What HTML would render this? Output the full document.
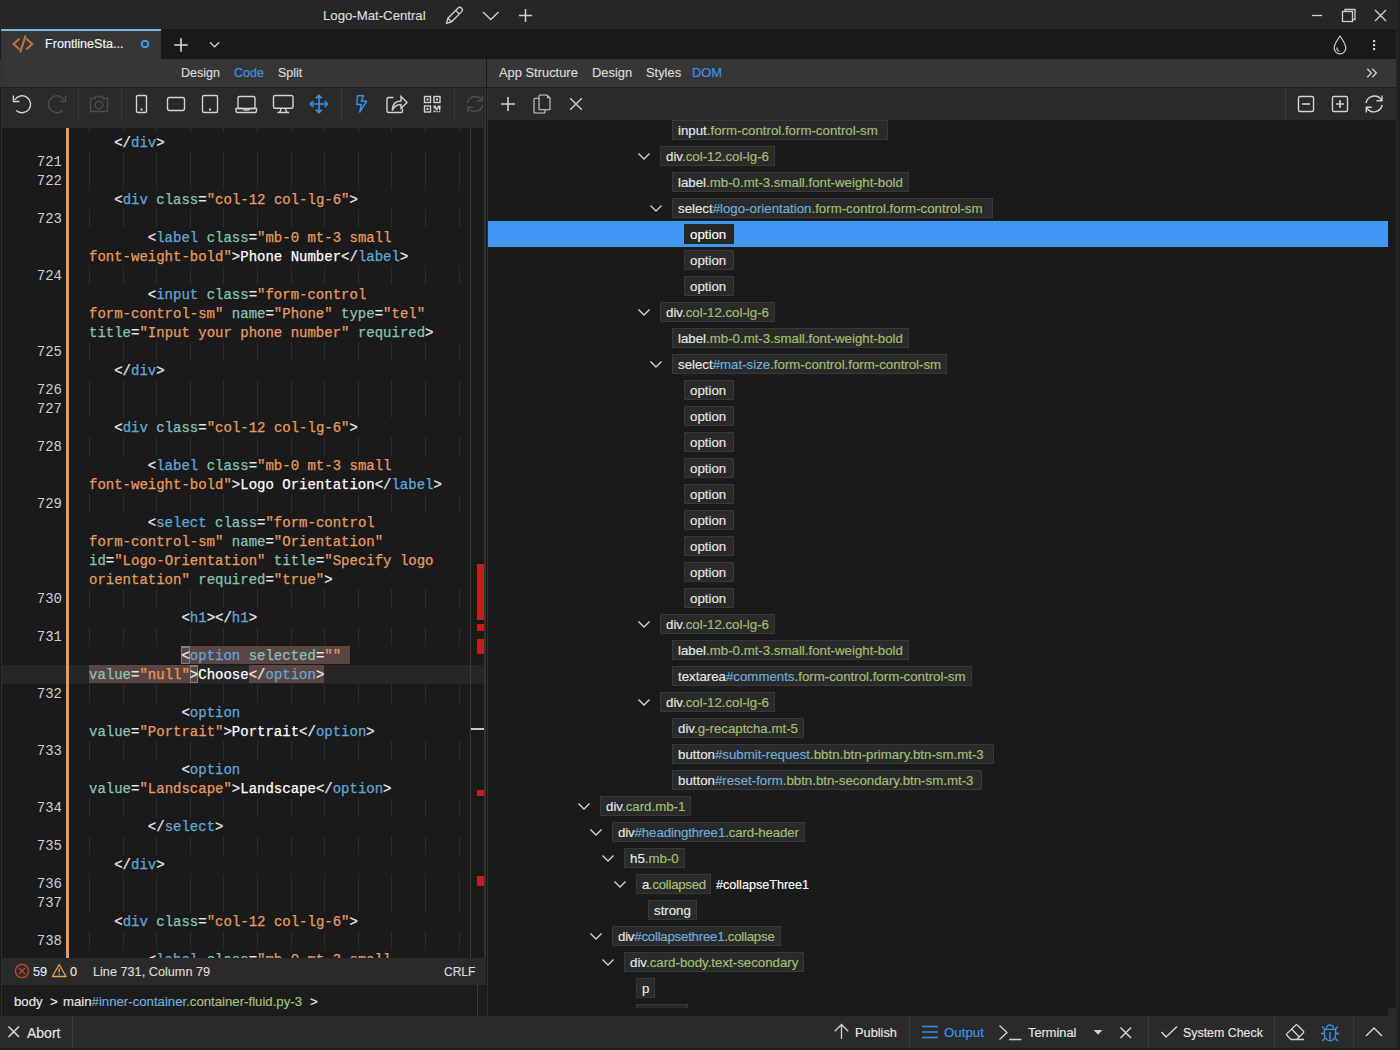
<!DOCTYPE html>
<html><head><meta charset="utf-8">
<style>
*{box-sizing:border-box}
html,body{margin:0;padding:0}
body{width:1400px;height:1050px;overflow:hidden;position:relative;background:#1a1a1a;font-family:"Liberation Sans",sans-serif;color:#d9d9d9;font-size:13px}
.a{position:absolute}
svg{position:absolute;overflow:visible}
.t{position:absolute;white-space:nowrap;line-height:16px;-webkit-text-stroke:0.15px currentColor}
/* code */
.code{font-family:"Liberation Mono",monospace;font-size:14px;-webkit-text-stroke:0.25px currentColor}
.row{position:absolute;left:0;height:19px;line-height:19px;white-space:pre;padding-top:1px}
.ln{position:absolute;left:0;width:61px;text-align:right;height:19px;line-height:19px;padding-top:1px;color:#cfcfcf;font-family:"Liberation Mono",monospace;font-size:14px}
.b{color:#e6e6e6}.tg{color:#5ea9da}.at{color:#82c6b6}.s{color:#e89c5a}.x{color:#ffffff}
.guides{position:absolute;left:88px;width:381px;height:19px;background-image:repeating-linear-gradient(90deg,#2c2c2c 0 1px,transparent 1px 33.6px)}
.mk{background:#5a4543;display:inline-block;height:17px;vertical-align:top;box-shadow:0 -1px 0 #5a4543}.bx{display:inline-block;height:17px;vertical-align:top;box-shadow:inset 0 0 0 1px #8c7b78,0 -1px 0 #8c7b78}
/* dom */
.n{position:absolute;height:20px;line-height:18px;padding:1px 5px 0 5px;background:#2a2a2a;border:1px solid #383838;color:#e8e8e8;font-size:13.27px;white-space:nowrap;-webkit-text-stroke:0.15px currentColor}
.n i{font-style:normal;color:#a3c071}
.n u{text-decoration:none;color:#6cb0de}
.chev{position:absolute;width:12px;height:7px}
</style></head><body>

<!-- title bar -->
<div class="a" style="left:0;top:0;width:1400px;height:29px;background:#262626"></div>
<div class="t" style="left:323px;top:8px;font-size:13.2px;color:#dcdcdc">Logo-Mat-Central</div>

<!-- tab bar -->
<div class="a" style="left:0;top:29px;width:1400px;height:30px;background:#191919"></div>
<div class="a" style="left:1px;top:29px;width:160px;height:30px;background:#363636;border-top:2px solid #7fb6d6"></div>
<div class="t" style="left:45px;top:36px;font-size:12.6px;color:#f2f2f2">FrontlineSta...</div>

<!-- view bar -->
<div class="a" style="left:0;top:59px;width:486px;height:28px;background:#363636"></div>
<div class="a" style="left:487px;top:59px;width:913px;height:28px;background:#363636"></div>
<div class="a" style="left:0;top:87px;width:1400px;height:1px;background:#202020"></div>
<div class="t" style="left:181px;top:65px;color:#dcdcdc;font-size:12.5px">Design</div>
<div class="t" style="left:234px;top:65px;color:#3d94f0;font-size:12.5px">Code</div>
<div class="t" style="left:278px;top:65px;color:#dcdcdc;font-size:12.5px">Split</div>
<div class="t" style="left:499px;top:65px;color:#dcdcdc;font-size:12.9px">App Structure</div>
<div class="t" style="left:592px;top:65px;color:#dcdcdc;font-size:12.9px">Design</div>
<div class="t" style="left:646px;top:65px;color:#dcdcdc;font-size:12.9px">Styles</div>
<div class="t" style="left:692px;top:65px;color:#3d94f0;font-size:12.9px">DOM</div>

<!-- toolbars -->
<div class="a" style="left:1px;top:88px;width:485px;height:40px;background:#2a2a2a"></div>
<div class="a" style="left:487px;top:88px;width:910px;height:32px;background:#2a2a2a"></div>
<div class="a" style="left:486px;top:59px;width:1px;height:957px;background:#191919"></div>

<!-- editor -->
<div class="a" style="left:1px;top:128px;width:484px;height:830px;background:#1a1a1a;overflow:hidden" id="ed">
<div class="guides" style="top:-14px"></div>
<div class="row code" style="left:88px;top:5px">   <span class="b">&lt;/</span><span class="tg">div</span><span class="b">&gt;</span></div>
<div class="guides" style="top:24px"></div>
<div class="ln" style="top:24px">721</div>
<div class="guides" style="top:43px"></div>
<div class="ln" style="top:43px">722</div>
<div class="row code" style="left:88px;top:62px">   <span class="b">&lt;</span><span class="tg">div</span><span class="b"> </span><span class="at">class</span><span class="b">=</span><span class="s">&quot;col-12 col-lg-6&quot;</span><span class="b">&gt;</span></div>
<div class="guides" style="top:81px"></div>
<div class="ln" style="top:81px">723</div>
<div class="row code" style="left:88px;top:100px">       <span class="b">&lt;</span><span class="tg">label</span><span class="b"> </span><span class="at">class</span><span class="b">=</span><span class="s">&quot;mb-0 mt-3 small</span></div>
<div class="row code" style="left:88px;top:119px"><span class="s">font-weight-bold&quot;</span><span class="b">&gt;</span><span class="x">Phone Number</span><span class="b">&lt;/</span><span class="tg">label</span><span class="b">&gt;</span></div>
<div class="guides" style="top:138px"></div>
<div class="ln" style="top:138px">724</div>
<div class="row code" style="left:88px;top:157px">       <span class="b">&lt;</span><span class="tg">input</span><span class="b"> </span><span class="at">class</span><span class="b">=</span><span class="s">&quot;form-control</span></div>
<div class="row code" style="left:88px;top:176px"><span class="s">form-control-sm&quot;</span><span class="b"> </span><span class="at">name</span><span class="b">=</span><span class="s">&quot;Phone&quot;</span><span class="b"> </span><span class="at">type</span><span class="b">=</span><span class="s">&quot;tel&quot;</span></div>
<div class="row code" style="left:88px;top:195px"><span class="at">title</span><span class="b">=</span><span class="s">&quot;Input your phone number&quot;</span><span class="b"> </span><span class="at">required</span><span class="b">&gt;</span></div>
<div class="guides" style="top:214px"></div>
<div class="ln" style="top:214px">725</div>
<div class="row code" style="left:88px;top:233px">   <span class="b">&lt;/</span><span class="tg">div</span><span class="b">&gt;</span></div>
<div class="guides" style="top:252px"></div>
<div class="ln" style="top:252px">726</div>
<div class="guides" style="top:271px"></div>
<div class="ln" style="top:271px">727</div>
<div class="row code" style="left:88px;top:290px">   <span class="b">&lt;</span><span class="tg">div</span><span class="b"> </span><span class="at">class</span><span class="b">=</span><span class="s">&quot;col-12 col-lg-6&quot;</span><span class="b">&gt;</span></div>
<div class="guides" style="top:309px"></div>
<div class="ln" style="top:309px">728</div>
<div class="row code" style="left:88px;top:328px">       <span class="b">&lt;</span><span class="tg">label</span><span class="b"> </span><span class="at">class</span><span class="b">=</span><span class="s">&quot;mb-0 mt-3 small</span></div>
<div class="row code" style="left:88px;top:347px"><span class="s">font-weight-bold&quot;</span><span class="b">&gt;</span><span class="x">Logo Orientation</span><span class="b">&lt;/</span><span class="tg">label</span><span class="b">&gt;</span></div>
<div class="guides" style="top:366px"></div>
<div class="ln" style="top:366px">729</div>
<div class="row code" style="left:88px;top:385px">       <span class="b">&lt;</span><span class="tg">select</span><span class="b"> </span><span class="at">class</span><span class="b">=</span><span class="s">&quot;form-control</span></div>
<div class="row code" style="left:88px;top:404px"><span class="s">form-control-sm&quot;</span><span class="b"> </span><span class="at">name</span><span class="b">=</span><span class="s">&quot;Orientation&quot;</span></div>
<div class="row code" style="left:88px;top:423px"><span class="at">id</span><span class="b">=</span><span class="s">&quot;Logo-Orientation&quot;</span><span class="b"> </span><span class="at">title</span><span class="b">=</span><span class="s">&quot;Specify logo</span></div>
<div class="row code" style="left:88px;top:442px"><span class="s">orientation&quot;</span><span class="b"> </span><span class="at">required</span><span class="b">=</span><span class="s">&quot;true&quot;</span><span class="b">&gt;</span></div>
<div class="guides" style="top:461px"></div>
<div class="ln" style="top:461px">730</div>
<div class="row code" style="left:88px;top:480px">           <span class="b">&lt;</span><span class="tg">h1</span><span class="b">&gt;&lt;/</span><span class="tg">h1</span><span class="b">&gt;</span></div>
<div class="guides" style="top:499px"></div>
<div class="ln" style="top:499px">731</div>
<div class="row code" style="left:88px;top:518px">           <span class="mk"><span class="bx b">&lt;</span><span class="tg">option</span><span class="b"> </span><span class="at">selected</span><span class="b">=</span><span class="s">""</span><span class="b"> </span></span></div>
<div class="a" style="left:1px;top:537px;width:483px;height:19px;background:#262626"></div>
<div class="row code" style="left:88px;top:537px"><span class="mk"><span class="at">value</span><span class="b">=</span><span class="s">"null"</span><span class="bx b">&gt;</span></span><span class="x">Choose</span><span class="mk"><span class="b">&lt;/</span><span class="tg">option</span><span class="b">&gt;</span></span></div>
<div class="guides" style="top:556px"></div>
<div class="ln" style="top:556px">732</div>
<div class="row code" style="left:88px;top:575px">           <span class="b">&lt;</span><span class="tg">option</span></div>
<div class="row code" style="left:88px;top:594px"><span class="at">value</span><span class="b">=</span><span class="s">&quot;Portrait&quot;</span><span class="b">&gt;</span><span class="x">Portrait</span><span class="b">&lt;/</span><span class="tg">option</span><span class="b">&gt;</span></div>
<div class="guides" style="top:613px"></div>
<div class="ln" style="top:613px">733</div>
<div class="row code" style="left:88px;top:632px">           <span class="b">&lt;</span><span class="tg">option</span></div>
<div class="row code" style="left:88px;top:651px"><span class="at">value</span><span class="b">=</span><span class="s">&quot;Landscape&quot;</span><span class="b">&gt;</span><span class="x">Landscape</span><span class="b">&lt;/</span><span class="tg">option</span><span class="b">&gt;</span></div>
<div class="guides" style="top:670px"></div>
<div class="ln" style="top:670px">734</div>
<div class="row code" style="left:88px;top:689px">       <span class="b">&lt;/</span><span class="tg">select</span><span class="b">&gt;</span></div>
<div class="guides" style="top:708px"></div>
<div class="ln" style="top:708px">735</div>
<div class="row code" style="left:88px;top:727px">   <span class="b">&lt;/</span><span class="tg">div</span><span class="b">&gt;</span></div>
<div class="guides" style="top:746px"></div>
<div class="ln" style="top:746px">736</div>
<div class="guides" style="top:765px"></div>
<div class="ln" style="top:765px">737</div>
<div class="row code" style="left:88px;top:784px">   <span class="b">&lt;</span><span class="tg">div</span><span class="b"> </span><span class="at">class</span><span class="b">=</span><span class="s">&quot;col-12 col-lg-6&quot;</span><span class="b">&gt;</span></div>
<div class="guides" style="top:803px"></div>
<div class="ln" style="top:803px">738</div>
<div class="row code" style="left:88px;top:822px">       <span class="b">&lt;</span><span class="tg">label</span><span class="b"> </span><span class="at">class</span><span class="b">=</span><span class="s">&quot;mb-0 mt-3 small</span></div>
</div>
<div class="a" style="left:488px;top:120px;width:909px;height:888px;overflow:hidden">
<div class="n" style="left:184px;top:0px;width:216px">input<i>.form-control.form-control-sm</i></div>
<svg class="chev" style="left:150px;top:33px" width="12" height="7" viewBox="0 0 12 7"><path d="M0.5 0.5L6 6L11.5 0.5" fill="none" stroke="#d8d8d8" stroke-width="1.3"/></svg>
<div class="n" style="left:172px;top:26px">div<i>.col-12.col-lg-6</i></div>
<div class="n" style="left:184px;top:52px">label<i>.mb-0.mt-3.small.font-weight-bold</i></div>
<svg class="chev" style="left:162px;top:85px" width="12" height="7" viewBox="0 0 12 7"><path d="M0.5 0.5L6 6L11.5 0.5" fill="none" stroke="#d8d8d8" stroke-width="1.3"/></svg>
<div class="n" style="left:184px;top:78px;width:321px">select<u>#logo-orientation</u><i>.form-control.form-control-sm</i></div>
<div class="a" style="left:0;top:101px;width:900px;height:26px;background:#4097f5"></div>
<div class="n" style="left:196px;top:104px;width:50px;background:#262626;border-color:#262626;color:#fff">option</div>
<div class="n" style="left:196px;top:130px;width:50px">option</div>
<div class="n" style="left:196px;top:156px;width:50px">option</div>
<svg class="chev" style="left:150px;top:189px" width="12" height="7" viewBox="0 0 12 7"><path d="M0.5 0.5L6 6L11.5 0.5" fill="none" stroke="#d8d8d8" stroke-width="1.3"/></svg>
<div class="n" style="left:172px;top:182px">div<i>.col-12.col-lg-6</i></div>
<div class="n" style="left:184px;top:208px">label<i>.mb-0.mt-3.small.font-weight-bold</i></div>
<svg class="chev" style="left:162px;top:241px" width="12" height="7" viewBox="0 0 12 7"><path d="M0.5 0.5L6 6L11.5 0.5" fill="none" stroke="#d8d8d8" stroke-width="1.3"/></svg>
<div class="n" style="left:184px;top:234px">select<u>#mat-size</u><i>.form-control.form-control-sm</i></div>
<div class="n" style="left:196px;top:260px;width:50px">option</div>
<div class="n" style="left:196px;top:286px;width:50px">option</div>
<div class="n" style="left:196px;top:312px;width:50px">option</div>
<div class="n" style="left:196px;top:338px;width:50px">option</div>
<div class="n" style="left:196px;top:364px;width:50px">option</div>
<div class="n" style="left:196px;top:390px;width:50px">option</div>
<div class="n" style="left:196px;top:416px;width:50px">option</div>
<div class="n" style="left:196px;top:442px;width:50px">option</div>
<div class="n" style="left:196px;top:468px;width:50px">option</div>
<svg class="chev" style="left:150px;top:501px" width="12" height="7" viewBox="0 0 12 7"><path d="M0.5 0.5L6 6L11.5 0.5" fill="none" stroke="#d8d8d8" stroke-width="1.3"/></svg>
<div class="n" style="left:172px;top:494px">div<i>.col-12.col-lg-6</i></div>
<div class="n" style="left:184px;top:520px">label<i>.mb-0.mt-3.small.font-weight-bold</i></div>
<div class="n" style="left:184px;top:546px">textarea<u>#comments</u><i>.form-control.form-control-sm</i></div>
<svg class="chev" style="left:150px;top:579px" width="12" height="7" viewBox="0 0 12 7"><path d="M0.5 0.5L6 6L11.5 0.5" fill="none" stroke="#d8d8d8" stroke-width="1.3"/></svg>
<div class="n" style="left:172px;top:572px">div<i>.col-12.col-lg-6</i></div>
<div class="n" style="left:184px;top:598px">div<i>.g-recaptcha.mt-5</i></div>
<div class="n" style="left:184px;top:624px;width:322px">button<u>#submit-request</u><i>.bbtn.btn-primary.btn-sm.mt-3</i></div>
<div class="n" style="left:184px;top:650px;width:310px">button<u>#reset-form</u><i>.bbtn.btn-secondary.btn-sm.mt-3</i></div>
<svg class="chev" style="left:90px;top:683px" width="12" height="7" viewBox="0 0 12 7"><path d="M0.5 0.5L6 6L11.5 0.5" fill="none" stroke="#d8d8d8" stroke-width="1.3"/></svg>
<div class="n" style="left:112px;top:676px">div<i>.card.mb-1</i></div>
<svg class="chev" style="left:102px;top:709px" width="12" height="7" viewBox="0 0 12 7"><path d="M0.5 0.5L6 6L11.5 0.5" fill="none" stroke="#d8d8d8" stroke-width="1.3"/></svg>
<div class="n" style="left:124px;top:702px;width:193px;letter-spacing:-0.12px">div<u>#headingthree1</u><i>.card-header</i></div>
<svg class="chev" style="left:114px;top:735px" width="12" height="7" viewBox="0 0 12 7"><path d="M0.5 0.5L6 6L11.5 0.5" fill="none" stroke="#d8d8d8" stroke-width="1.3"/></svg>
<div class="n" style="left:136px;top:728px">h5<i>.mb-0</i></div>
<svg class="chev" style="left:126px;top:761px" width="12" height="7" viewBox="0 0 12 7"><path d="M0.5 0.5L6 6L11.5 0.5" fill="none" stroke="#d8d8d8" stroke-width="1.3"/></svg>
<div class="n" style="left:148px;top:754px;width:75px;letter-spacing:-0.3px">a<i>.collapsed</i></div>
<div class="t" style="left:228px;top:757px;font-size:12.6px;color:#fff">#collapseThree1</div>
<div class="n" style="left:160px;top:780px">strong</div>
<svg class="chev" style="left:102px;top:813px" width="12" height="7" viewBox="0 0 12 7"><path d="M0.5 0.5L6 6L11.5 0.5" fill="none" stroke="#d8d8d8" stroke-width="1.3"/></svg>
<div class="n" style="left:124px;top:806px;width:169px;letter-spacing:-0.24px">div<u>#collapsethree1</u><i>.collapse</i></div>
<svg class="chev" style="left:114px;top:839px" width="12" height="7" viewBox="0 0 12 7"><path d="M0.5 0.5L6 6L11.5 0.5" fill="none" stroke="#d8d8d8" stroke-width="1.3"/></svg>
<div class="n" style="left:136px;top:832px">div<i>.card-body.text-secondary</i></div>
<div class="n" style="left:148px;top:858px">p</div>
<div class="n" style="left:148px;top:884px"><span style="display:inline-block;width:40px"></span></div>
</div>

<!-- editor status -->
<div class="a" style="left:1px;top:958px;width:485px;height:27px;background:#2a2a2a"></div>
<div class="t" style="left:93px;top:964px;font-size:12.7px;color:#dcdcdc">Line 731, Column 79</div>
<div class="t" style="left:444px;top:964px;font-size:12px;color:#dcdcdc">CRLF</div>
<div class="t" style="left:33px;top:964px;font-size:12.7px;color:#e6e6e6">59</div>
<div class="t" style="left:70px;top:964px;font-size:12.7px;color:#e6e6e6">0</div>
<div class="a" style="left:1px;top:985px;width:484px;height:31px;background:#1c1c1c"></div>
<div class="t" style="left:14px;top:994px;font-size:13.2px;color:#e6e6e6">body</div>
<div class="t" style="left:50px;top:994px;font-size:13.2px;color:#e6e6e6">&gt;</div>
<div class="t" style="left:63px;top:994px;font-size:13.2px;color:#e6e6e6">main<span style="color:#6cb0de">#inner-container</span><span style="color:#a9c27a">.container-fluid.py-3</span></div>
<div class="t" style="left:310px;top:994px;font-size:13.2px;color:#e6e6e6">&gt;</div>

<!-- bottom bar -->
<div class="a" style="left:0;top:1016px;width:1400px;height:32px;background:#2a2a2a"></div>
<div class="a" style="left:0;top:1048px;width:1400px;height:2px;background:#1c1c1c"></div>
<div class="t" style="left:27px;top:1025px;font-size:14px;color:#e6e6e6">Abort</div>
<div class="t" style="left:855px;top:1025px;font-size:12.8px;color:#e6e6e6">Publish</div>
<div class="t" style="left:944px;top:1025px;font-size:13.3px;color:#3d94f0">Output</div>
<div class="t" style="left:1028px;top:1025px;font-size:12.8px;color:#e6e6e6">Terminal</div>
<div class="t" style="left:1183px;top:1025px;font-size:12.4px;color:#e6e6e6">System Check</div>
<svg style="left:0;top:0" width="1400" height="1050" viewBox="0 0 1400 1050" fill="none" stroke-linecap="butt" stroke-linejoin="miter">
<!-- title bar -->
<g stroke="#cfcfcf" stroke-width="1.3">
<path d="M446.5 23.2 L447.9 18.2 L458.1 8.0 A2.55 2.55 0 0 1 461.7 11.6 L451.5 21.8 Z M455.7 10.4 L459.3 14.0 M447.9 18.2 L451.5 21.8"/>
<path d="M483 12 L490.8 19.5 L498.5 12"/>
<path d="M525.5 9 V22 M519 15.5 H532" stroke-width="1.5"/>
<path d="M1312 15.5 H1322"/>
<rect x="1342.5" y="11.5" width="10" height="10"/>
<path d="M1345 11.5 V9.5 H1355 V19.5 H1352.5"/>
<path d="M1375 10 L1386 21 M1386 10 L1375 21" stroke-width="1.4"/>
</g>
<!-- tab bar -->
<g stroke="#c2713b" stroke-width="2.2" stroke-linecap="round" stroke-linejoin="round">
<path d="M18.8 39.3 L13.5 44 L18.8 48.7 M27 39.3 L32.3 44 L27 48.7"/>
<path d="M25.3 36.5 L20.5 51.5"/>
</g>
<circle cx="145" cy="44" r="3.3" stroke="#3d9cf5" stroke-width="1.9"/>
<path d="M181 38.3 V51.7 M174.3 45 H187.7" stroke="#d8d8d8" stroke-width="1.6"/>
<path d="M210 42.2 L214.6 46.8 L219.2 42.2" stroke="#cfcfcf" stroke-width="1.3"/>
<path d="M1340 36 C1337 40.5 1334.2 44 1334.2 48 A5.8 5.8 0 0 0 1345.8 48 C1345.8 44 1343 40.5 1340 36 Z" stroke="#d0d0d0" stroke-width="1.2"/>
<path d="M1336.8 47.5 A3.6 3.6 0 0 0 1339.5 51.2" stroke="#d0d0d0" stroke-width="1.1"/>
<g fill="#d0d0d0"><rect x="1373" y="40" width="2.2" height="2.2"/><rect x="1373" y="44" width="2.2" height="2.2"/><rect x="1373" y="48" width="2.2" height="2.2"/></g>
<!-- view bar >> -->
<path d="M1367.3 68.8 L1371.3 73 L1367.3 77.2 M1372.3 68.8 L1376.3 73 L1372.3 77.2" stroke="#d0d0d0" stroke-width="1.3"/>
<!-- toolbar separators -->
<g stroke="#3a3a3a" stroke-width="1">
<path d="M78.5 88 V120 M121.5 88 V120 M341.5 88 V120 M454.5 88 V120 M1285.5 88 V120"/>
</g>
<path d="M485.5 88 V128" stroke="#383838"/>
<path d="M487.5 88 V120" stroke="#333"/>
<!-- toolbar left -->
<g stroke="#d2d2d2" stroke-width="1.4">
<path d="M14.8 100 A8.5 8.5 0 1 1 16.3 110.5"/>
<path d="M13.4 95.5 V101.5 H19.5"/>
<rect x="136.5" y="95.5" width="10" height="17" rx="1.5"/>
<rect x="167.5" y="97.5" width="17" height="13" rx="2"/>
<rect x="202.5" y="95.5" width="15" height="17" rx="1.5"/>
<rect x="238" y="96.5" width="17" height="12" rx="1.5"/>
<path d="M236 108.5 H243 L244.5 110 H248.5 L250 108.5 H256.5 V111 A1.5 1.5 0 0 1 255 112.5 H237.5 A1.5 1.5 0 0 1 236 111 Z"/>
<rect x="273.5" y="95.5" width="19.5" height="12.8" rx="1.5"/>
<path d="M281.3 108.3 L279.8 112.3 M285.2 108.3 L286.7 112.3 M277.5 112.5 H289"/>
<path d="M393.5 97.5 H388.5 A1.5 1.5 0 0 0 387 99 V111 A1.5 1.5 0 0 0 388.5 112.5 H401 A1.5 1.5 0 0 0 402.5 111 V108.5"/>
<path d="M392.3 110.5 C392.3 104.5 395.5 101 401 101 V96.5 L407 102.5 L401 108.3 V104.5 C397 104.5 394 106.5 392.3 110.5 Z"/>
<rect x="424.5" y="96.5" width="6" height="6"/><rect x="434" y="96.5" width="6" height="6"/><rect x="424.5" y="106" width="6" height="6"/>
</g>
<g fill="#d2d2d2"><rect x="140.5" y="108.5" width="2" height="2"/><rect x="209" y="108.5" width="2" height="2"/>
<rect x="426.5" y="98.5" width="2" height="2"/><rect x="436" y="98.5" width="2" height="2"/><rect x="426.5" y="108" width="2" height="2"/>
<path d="M433.5 105.5 H436 V107.5 H437.5 V105.5 H440.5 V110 H439 V108.5 H437.5 V110 H435.5 V108.5 H433.5 Z M433.5 110.5 h2 v1.8 h-2z M436.5 110.8 h1.5 v1.5 h-1.5z M438.8 110.8 h1.5 v1.5 h-1.5z"/></g>
<g stroke="#4d4d4d" stroke-width="1.4">
<path d="M64.2 100 A8.5 8.5 0 1 0 62.7 110.5"/>
<path d="M65.6 95.5 V101.5 H59.5"/>
<path d="M90.5 98.5 H95.3 V96.5 H102.7 V98.5 H107.5 V111.5 H90.5 Z"/>
<circle cx="99" cy="105" r="3.8"/>
<path d="M467.3 103 A8 8 0 0 1 482 100.5 M482.7 105 A8 8 0 0 1 468 107.5"/>
<path d="M482.3 95.5 V100.8 H477 M467.7 112.5 V107.2 H473"/>
</g>
<g stroke="#3a8fe6" stroke-width="1.7" stroke-linejoin="round">
<path d="M310.5 104 H327.5 M319 95.5 V112.5"/>
<path d="M313.3 101 L310.3 104 L313.3 107 M324.7 101 L327.7 104 L324.7 107 M316 98.3 L319 95.3 L322 98.3 M316 109.7 L319 112.7 L322 109.7"/>
<path d="M357.5 95.7 H363.5 L361.3 101.3 H366.5 L359.8 112 L361.4 104.5 H356.9 Z" stroke-width="1.5"/>
</g>
<!-- toolbar right -->
<g stroke="#d2d2d2" stroke-width="1.4">
<path d="M508 97 V111 M501 104 H515" stroke-width="1.6"/>
<path d="M539 98.3 H535 A1 1 0 0 0 534 99.3 V112 A1 1 0 0 0 535 113 H544 A1 1 0 0 0 545 112 V109.7" stroke-width="1.1"/>
<path d="M540 95 H547 L550 98 V108.7 A1 1 0 0 1 549 109.7 H540 A1 1 0 0 1 539 108.7 V96 A1 1 0 0 1 540 95 Z" stroke-width="1.1"/>
<path d="M570.2 98.2 L581.8 109.8 M581.8 98.2 L570.2 109.8" stroke-width="1.4"/>
<rect x="1298.5" y="96.5" width="15" height="15" rx="1.5"/>
<path d="M1302 104 H1310" stroke-width="1.6"/>
<rect x="1332.5" y="96.5" width="15" height="15" rx="1.5"/>
<path d="M1336 104 H1344 M1340 100 V108" stroke-width="1.6"/>
<path d="M1366 103 A8.5 8.5 0 0 1 1381.5 100 M1382.2 105 A8.5 8.5 0 0 1 1366.8 108"/>
<path d="M1382 95.5 V100.8 H1376.5 M1366.3 112.5 V107.2 H1371.8"/>
</g>
<path d="M547 95.8 L549.4 98.2 H547 Z" fill="#d2d2d2"/>
<!-- editor decorations -->
<rect x="66" y="128" width="3" height="830" fill="#e59c56"/>
<path d="M1.5 58 V1016" stroke="#2e2e2e"/>
<path d="M470.5 128 V958" stroke="#3a3a3a"/>
<rect x="484" y="128" width="2" height="830" fill="#333"/>
<path d="M477.5 985 V1016" stroke="#3a3a3a"/>
<path d="M487.5 120 V1016" stroke="#303030"/>
<rect x="1396" y="0" width="4" height="1050" fill="#202020"/><path d="M1396.5 0 V1050" stroke="#2a2a2a"/>
<rect x="1388" y="1008" width="8" height="8" fill="#2a2a2a"/>
<g fill="#c41d1d"><rect x="477" y="564" width="7" height="56"/><rect x="477" y="624" width="7" height="7"/><rect x="477" y="639" width="7" height="15"/><rect x="477" y="790" width="7" height="6"/><rect x="477" y="876" width="7" height="10"/></g>
<rect x="471" y="728" width="13" height="2" fill="#c8c8c8"/>
<!-- status -->
<circle cx="22" cy="971" r="6.6" stroke="#c4473a" stroke-width="1.3"/>
<path d="M19 968 L25 974 M25 968 L19 974" stroke="#c4473a" stroke-width="1.2"/>
<path d="M59.2 964.5 L66 976.5 H52.4 Z" stroke="#e5a24e" stroke-width="1.3" stroke-linejoin="round"/>
<path d="M59.2 968.5 V972.5" stroke="#e5a24e" stroke-width="1.4"/><rect x="58.5" y="973.7" width="1.4" height="1.4" fill="#e5a24e"/>
<!-- bottom bar -->
<path d="M8.5 1026.5 L19 1037 M19 1026.5 L8.5 1037" stroke="#dedede" stroke-width="1.5"/>
<g stroke="#3a3a3a"><path d="M72.5 1016 V1048 M909.5 1016 V1048 M1148.5 1016 V1048 M1274.5 1016 V1048 M1353.5 1016 V1048"/></g>
<g stroke="#d2d2d2" stroke-width="1.3">
<path d="M841.5 1024.5 V1039 M834.8 1031.2 L841.5 1024.5 L848.2 1031.2"/>
<path d="M999.5 1025.5 L1007 1032.5 L999.5 1039.5 M1009 1039.5 H1021.5"/>
<path d="M1120.5 1027.5 L1131 1038 M1131 1027.5 L1120.5 1038" stroke-width="1.5"/>
<path d="M1161.5 1032 L1166 1037 L1177 1026.5" stroke-width="1.5"/>
<path d="M1295.8 1025 A1 1 0 0 1 1297.2 1025 L1303.5 1031.3 A1 1 0 0 1 1303.5 1032.7 L1296.7 1039.5 H1291 L1286.8 1035.3 A1 1 0 0 1 1286.8 1033.9 Z M1291.8 1029.3 L1298.8 1036.5 M1296.7 1039.5 H1304"/>
<path d="M1366 1036 L1374 1028 L1382 1036" stroke-width="1.5"/>
</g>
<path d="M1093.7 1030 H1102.4 L1098 1034.8 Z" fill="#d0d0d0"/>
<g stroke="#3d8fe6" stroke-width="1.5">
<path d="M922 1026.5 H938 M922 1032 H938 M922 1037.5 H938"/>
<path d="M1326.4 1028.6 A3.6 3.6 0 0 1 1333.6 1028.6 M1324.4 1029.4 H1335.6 V1034.5 A5.6 6.2 0 0 1 1324.4 1034.5 Z M1330 1032 V1039.5 M1325 1029.4 L1322.2 1026.4 M1335 1029.4 L1337.8 1026.4 M1324.4 1033.5 H1321 M1335.6 1033.5 H1339 M1324.8 1038.3 L1322.2 1041 M1335.2 1038.3 L1337.8 1041" stroke-width="1.4"/>
</g>
</svg>


</body></html>
